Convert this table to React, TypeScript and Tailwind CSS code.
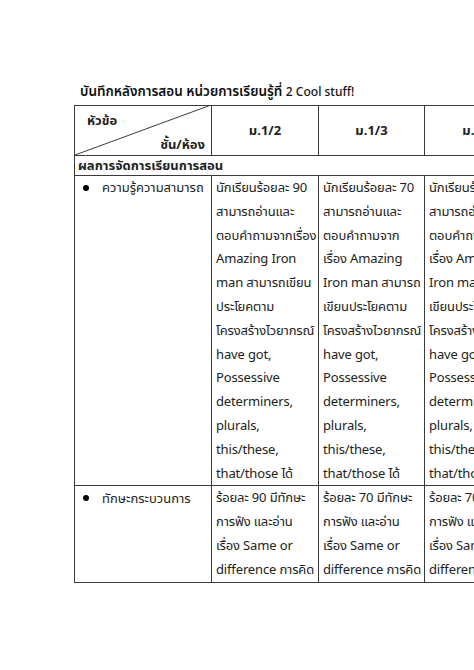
import React from 'react';

const col2Row1 = [
  'นักเรียนร้อยละ 90',
  'สามารถอ่านและ',
  'ตอบคำถามจากเรื่อง',
  'Amazing Iron',
  'man สามารถเขียน',
  'ประโยคตาม',
  'โครงสร้างไวยากรณ์',
  'have got,',
  'Possessive',
  'determiners,',
  'plurals,',
  'this/these,',
  'that/those ได้',
];

const col3Row1 = [
  'นักเรียนร้อยละ 70',
  'สามารถอ่านและ',
  'ตอบคำถามจาก',
  'เรื่อง Amazing',
  'Iron man สามารถ',
  'เขียนประโยคตาม',
  'โครงสร้างไวยากรณ์',
  'have got,',
  'Possessive',
  'determiners,',
  'plurals,',
  'this/these,',
  'that/those ได้',
];

const row2 = (pct: string) => [
  `ร้อยละ ${pct} มีทักษะ`,
  'การฟัง และอ่าน',
  'เรื่อง Same or',
  'difference การคิด',
];

function Lines({ lines }: { lines: string[] }) {
  return (
    <div className="flex flex-col">
      {lines.map((l, i) => (
        <div key={i} className="h-[23.8px] leading-[23.8px] whitespace-nowrap tracking-[-0.15px]">
          {l}
        </div>
      ))}
    </div>
  );
}

function Bullet({ label }: { label: string }) {
  return (
    <div className="flex items-center h-[23.8px] pl-[8px] whitespace-nowrap">
      <span className="w-[6px] h-[6px] rounded-full bg-black mr-[13px]" />
      <span>{label}</span>
    </div>
  );
}

export default function App() {
  const border = 'border border-[#3a3a3a] p-0';
  const cell = `${border} align-top`;
  const head = `${border} align-middle text-center font-bold`;
  return (
    <div
      className="w-[474px] h-[670px] overflow-hidden bg-white text-[#222]"
      style={{ fontFamily: '"Noto Sans", "Noto Sans Thai", "DejaVu Sans", sans-serif' }}
    >
      <div className="pt-[81px] pl-[80px] text-[13.5px] font-semibold leading-[20px] whitespace-nowrap text-[#111]">
        บันทึกหลังการสอน หน่วยการเรียนรู้ที่ <span className="text-[12px] font-medium">2 Cool stuff!</span>
      </div>
      <table className="ml-[74px] mt-[3px] border-collapse table-fixed w-[458px] text-[13px]">
        <colgroup>
          <col className="w-[137px]" />
          <col className="w-[107px]" />
          <col className="w-[106px]" />
          <col className="w-[108px]" />
        </colgroup>
        <tbody>
          <tr className="h-[49px]">
            <td className={`${cell} relative font-bold`}>
              <svg className="absolute inset-0 w-full h-full" preserveAspectRatio="none" viewBox="0 0 100 100">
                <line x1="100" y1="-2" x2="0" y2="100" stroke="#3a3a3a" strokeWidth="1" vectorEffect="non-scaling-stroke" />
              </svg>
              <div className="flex flex-col h-[49px] justify-between px-[12px] pt-[3px]">
                <div className="leading-[22px]">หัวข้อ</div>
                <div className="leading-[22px] text-right -mr-[6px]">ชั้น/ห้อง</div>
              </div>
            </td>
            <td className={head}>ม.1/2</td>
            <td className={head}>ม.1/3</td>
            <td className={head}>ม.1/4</td>
          </tr>
          <tr className="h-[20px]">
            <td colSpan={4} className={`${border} align-middle font-bold pl-[3px] leading-[19px] whitespace-nowrap`}>
              ผลการจัดการเรียนการสอน
            </td>
          </tr>
          <tr>
            <td className={cell}>
              <Bullet label="ความรู้ความสามารถ" />
            </td>
            <td className={`${cell} pl-[4px]`}>
              <Lines lines={col2Row1} />
            </td>
            <td className={`${cell} pl-[4px]`}>
              <Lines lines={col3Row1} />
            </td>
            <td className={`${cell} pl-[4px]`}>
              <Lines lines={col3Row1} />
            </td>
          </tr>
          <tr>
            <td className={cell}>
              <Bullet label="ทักษะกระบวนการ" />
            </td>
            <td className={`${cell} pl-[4px]`}>
              <Lines lines={row2('90')} />
            </td>
            <td className={`${cell} pl-[4px]`}>
              <Lines lines={row2('70')} />
            </td>
            <td className={`${cell} pl-[4px]`}>
              <Lines lines={row2('70')} />
            </td>
          </tr>
        </tbody>
      </table>
    </div>
  );
}
